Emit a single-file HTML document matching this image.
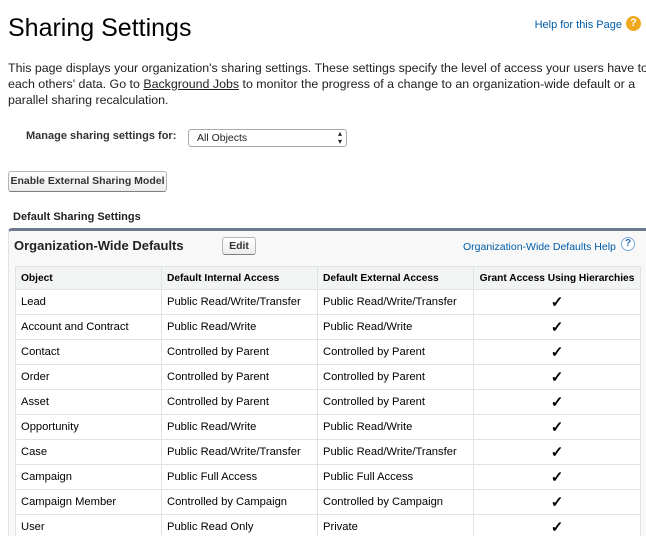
<!DOCTYPE html>
<html><head><style>
html,body{margin:0;width:646px;height:552px;overflow:hidden;background:#fff}
body{font-family:"Liberation Sans",Arial,sans-serif;color:#222;position:relative}
.a{position:absolute;white-space:nowrap}
h1{position:absolute;left:8px;top:14px;margin:0;font-size:25px;font-weight:normal;color:#000}
.help{right:24px;top:19px;font-size:11px;color:#015ba7}
.qm{position:absolute;left:626px;top:16px;width:15px;height:15px;border-radius:50%;background:#f0a81c;color:#fff;font-size:11px;font-weight:bold;text-align:center;line-height:15px}
.p{left:8px;top:60px;font-size:12.4px;line-height:16px;color:#222;white-space:normal;width:660px}
.btn{position:absolute;border:1px solid #b5b5b5;border-bottom-color:#7f7f7f;border-radius:3px;background:linear-gradient(#fff,#ececec);font-size:10.5px;font-weight:bold;color:#333;text-align:center}
.panel{position:absolute;left:8px;top:228px;width:640px;height:308px;background:#f8f8f8;border-top:3px solid #6c7a8c;border-left:1px solid #e0e3e5;border-radius:4px 0 0 0;box-sizing:border-box}
table{position:absolute;left:15px;top:266px;width:626px;border-collapse:collapse;background:#fff;font-size:11.2px}
td,th{border:1px solid #e0e3e5;height:24px;padding:0 0 0 5px;text-align:left;color:#000}
th{background:#f2f3f3;font-size:10.2px;font-weight:bold;height:22px}
td.c,th.c{text-align:center;padding:0}
td.c{font-size:15px;font-weight:bold;line-height:15px}
</style></head><body>
<h1>Sharing Settings</h1>
<div class="a help">Help for this Page</div><div class="qm">?</div>
<div class="a p">This page displays your organization's sharing settings. These settings specify the level of access your users have to each others' data. Go to <u>Background Jobs</u> to monitor the progress of a change to an organization-wide default or a parallel sharing recalculation.</div>
<div class="a" style="left:26px;top:130px;font-size:11px;font-weight:bold;color:#333">Manage sharing settings for:</div>
<div class="a" style="left:188px;top:129px;width:157px;height:16px;border:1px solid #aaa;border-radius:3px;background:#fff;font-size:10.5px;line-height:16px;text-indent:8px;color:#222">All Objects<span style="position:absolute;right:4px;top:0;font-size:8px;line-height:8px;text-indent:0">▴<br>▾</span></div>
<div class="btn" style="left:8px;top:171px;width:157px;height:19px;line-height:19px">Enable External Sharing Model</div>
<div class="a" style="left:13px;top:211px;font-size:11px;font-weight:bold;color:#222">Default Sharing Settings</div>
<div class="panel"></div>
<div class="a" style="left:14px;top:238px;font-size:13px;font-weight:bold;color:#222">Organization-Wide Defaults</div>
<div class="btn" style="left:222px;top:237px;width:32px;height:16px;line-height:16px">Edit</div>
<div class="a" style="left:463px;top:241px;font-size:10.5px;color:#015ba7">Organization-Wide Defaults Help</div>
<div class="a" style="left:621px;top:237px;width:12px;height:12px;border:1px solid #7aa8d6;border-radius:50%;background:#fff;color:#2a6bb5;font-size:10px;text-align:center;line-height:12px;font-weight:bold">?</div>
<table>
<tr><th style="width:140px">Object</th><th style="width:150px">Default Internal Access</th><th style="width:150px">Default External Access</th><th class="c">Grant Access Using Hierarchies</th></tr>
<tr><td>Lead</td><td>Public Read/Write/Transfer</td><td>Public Read/Write/Transfer</td><td class="c">✓</td></tr>
<tr><td>Account and Contract</td><td>Public Read/Write</td><td>Public Read/Write</td><td class="c">✓</td></tr>
<tr><td>Contact</td><td>Controlled by Parent</td><td>Controlled by Parent</td><td class="c">✓</td></tr>
<tr><td>Order</td><td>Controlled by Parent</td><td>Controlled by Parent</td><td class="c">✓</td></tr>
<tr><td>Asset</td><td>Controlled by Parent</td><td>Controlled by Parent</td><td class="c">✓</td></tr>
<tr><td>Opportunity</td><td>Public Read/Write</td><td>Public Read/Write</td><td class="c">✓</td></tr>
<tr><td>Case</td><td>Public Read/Write/Transfer</td><td>Public Read/Write/Transfer</td><td class="c">✓</td></tr>
<tr><td>Campaign</td><td>Public Full Access</td><td>Public Full Access</td><td class="c">✓</td></tr>
<tr><td>Campaign Member</td><td>Controlled by Campaign</td><td>Controlled by Campaign</td><td class="c">✓</td></tr>
<tr><td>User</td><td>Public Read Only</td><td>Private</td><td class="c">✓</td></tr>
</table>
<div style="position:absolute;left:0;top:536px;width:646px;height:16px;background:#fff"></div>
</body></html>
